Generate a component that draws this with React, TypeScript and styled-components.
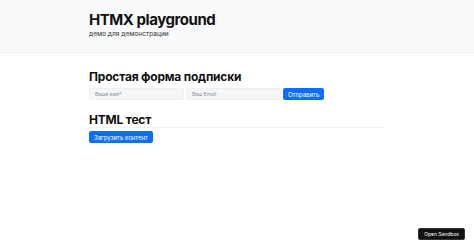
import styled, { createGlobalStyle } from "styled-components";

const GlobalStyle = createGlobalStyle`
  body {
    margin: 0;
    font-family: Inter, "Liberation Sans", sans-serif;
    color: #111;
    background: #fff;
  }
`;

export default function App() {
  return (
    <>
      <GlobalStyle />
      <Header>
        <Container>
          <Title>HTMX playground</Title>
          <Subtitle>демо для демонстрации</Subtitle>
        </Container>
      </Header>
      <Main>
        <Container>
          <SectionTitle>Простая форма подписки</SectionTitle>
          <Form onSubmit={(e) => e.preventDefault()}>
            <Input placeholder="Ваше имя*" />
            <Input placeholder="Ваш Email" />
            <Button type="submit">Отправить</Button>
          </Form>
          <SectionTitle $underline>HTML тест</SectionTitle>
          <Actions>
            <Button type="button">Загрузить контент</Button>
          </Actions>
        </Container>
      </Main>
      <SandboxButton>Open Sandbox</SandboxButton>
    </>
  );
}

const Container = styled.div`
  margin: 0 auto;
  width: 296px;
`;

const Header = styled.header`
  height: 53px;
  padding-top: 10px;
  box-sizing: border-box;
  background: #f8f9fa;
  border-bottom: 1px solid #eceef0;
`;

const Title = styled.h1`
  margin: 0;
  font-size: 15px;
  line-height: 19px;
  font-weight: 700;
  letter-spacing: -0.45px;
`;

const Subtitle = styled.p`
  margin: 1px 0 0;
  font-size: 6.6px;
  line-height: 9px;
  color: #333;
`;

const Main = styled.main`
  padding-top: 16px;
`;

const SectionTitle = styled.h2<{ $underline?: boolean }>`
  margin: 0 0 ${(p) => (p.$underline ? "3px" : "4px")};
  font-size: 12px;
  line-height: 15px;
  font-weight: 700;
  letter-spacing: -0.2px;
  border-bottom: ${(p) => (p.$underline ? "1px solid #f1f2f4" : "none")};
`;

const Form = styled.form`
  display: flex;
  gap: 2px;
  margin-bottom: 12px;
`;

const Actions = styled.div`
  display: flex;
`;

const Input = styled.input`
  width: 95px;
  height: 12px;
  box-sizing: border-box;
  padding: 0 5px;
  font-family: inherit;
  font-size: 5px;
  background: #f5f6f8;
  border: 1px solid #eef0f2;
  border-radius: 1px;
  outline: none;

  &::placeholder {
    color: #8a8f96;
  }
`;

const Button = styled.button`
  height: 12px;
  padding: 0 5px;
  font-family: inherit;
  font-size: 6px;
  color: #fff;
  background: #0d6efd;
  border: none;
  border-radius: 2px;
  cursor: pointer;
`;

const SandboxButton = styled.button`
  position: fixed;
  right: 9px;
  bottom: 8px;
  height: 12px;
  padding: 0 5px;
  font-family: inherit;
  font-size: 5px;
  color: #fff;
  background: #111;
  border: 1px solid #333;
  border-radius: 2px;
`;
